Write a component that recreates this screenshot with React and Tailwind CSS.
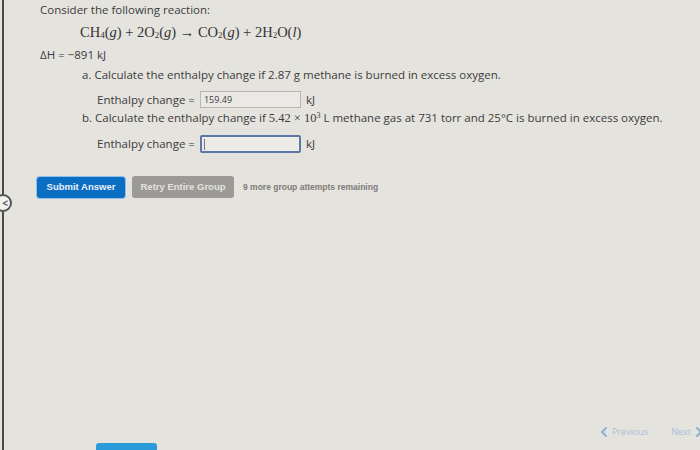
import { ChevronLeft, ChevronRight } from 'lucide-react';

const sans = { fontFamily: '"Open Sans", "Liberation Sans", sans-serif' };
const serif = { fontFamily: '"Liberation Serif", serif' };

function Sub({ children }) {
  return <sub className="relative top-[1px] text-[9px] leading-none">{children}</sub>;
}

export default function App() {
  return (
    <div
      className="relative h-[450px] w-[700px] overflow-hidden bg-[#e5e3de] text-[#3b3b3b]"
      style={sans}
    >
      {/* left screen edge */}
      <div className="absolute left-[2px] top-0 h-full w-[2px] bg-[#4a4a48]" />
      <div className="absolute left-[-6px] top-[194px] flex h-[18px] w-[18px] items-center justify-center rounded-full border-2 border-[#555] bg-[#f3f2ef] text-[10px] font-bold text-[#555]">
        <span className="ml-[4px]">&lt;</span>
      </div>

      <div className="pl-[40px] pt-[2px] text-[11.5px] leading-[16px]">
        <p>Consider the following reaction:</p>
        <p className="mt-[6px] h-[16px] pl-[40px] text-[14.5px] text-[#333]" style={serif}>
          CH<Sub>4</Sub>(<i>g</i>) + 2O<Sub>2</Sub>(<i>g</i>) → CO<Sub>2</Sub>(<i>g</i>) + 2H
          <Sub>2</Sub>O(<i>l</i>)
        </p>
        <p className="mt-[7px]">ΔH = −891 kJ</p>

        <div className="mt-[4px] pl-[42px]">
          <p>a. Calculate the enthalpy change if 2.87 g methane is burned in excess oxygen.</p>
          <div className="mt-[8px] flex h-[17px] items-center pl-[15px]">
            <span>Enthalpy change =</span>
            <div className="ml-[5px] flex h-[17px] w-[101px] items-center border border-[#b9b7b2] bg-[#ebe9e5] px-[3px] text-[9px]">
              159.49
            </div>
            <span className="ml-[5px]">kJ</span>
          </div>
          <p className="mt-[2px] whitespace-nowrap">
            b. Calculate the enthalpy change if{' '}
            <span style={serif} className="text-[12.5px]">
              5.42 × 10<sup className="text-[8px] leading-none">3</sup>
            </span>{' '}
            L methane gas at 731 torr and 25°C is burned in excess oxygen.
          </p>
          <div className="mt-[9px] flex h-[18px] items-center pl-[15px]">
            <span>Enthalpy change =</span>
            <div className="ml-[5px] flex h-[18px] w-[101px] items-center rounded-[2px] border-2 border-[#5d78a8] bg-[#ecebe7] px-[2px]">
              <div className="h-[11px] w-px bg-[#777]" />
            </div>
            <span className="ml-[5px]">kJ</span>
          </div>
        </div>
      </div>

      <div className="mt-[23px] flex items-center pl-[37px]" style={{ fontFamily: '"Liberation Sans", sans-serif' }}>
        <button className="h-[21px] w-[88px] rounded-[3px] bg-[#0c6ec3] text-[9.5px] font-bold text-[#e8f0fa] shadow-[0_0_0_1px_#8fbde6]">
          Submit Answer
        </button>
        <button className="ml-[7px] h-[22px] w-[102px] rounded-[3px] bg-[#9c9a96] text-[9.5px] font-bold text-[#e4e2de]">
          Retry Entire Group
        </button>
        <span className="ml-[9px] text-[8.5px] font-bold text-[#7d7b77]">
          9 more group attempts remaining
        </span>
      </div>

      {/* previous / next */}
      <div className="absolute left-[596px] top-[424px] flex items-center text-[9px] text-[#a9bfd8]">
        <ChevronLeft className="h-[16px] w-[16px] text-[#8fb1d8]" strokeWidth={3} />
        <span>Previous</span>
        <span className="ml-[23px]">Next</span>
        <ChevronRight className="h-[16px] w-[16px] text-[#8fb1d8]" strokeWidth={3} />
      </div>

      {/* show hint, cut off by the bottom edge */}
      <div className="absolute left-[96px] top-[443px] h-[16px] w-[61px] rounded-[3px] bg-[#2a9ad8]" />
    </div>
  );
}
